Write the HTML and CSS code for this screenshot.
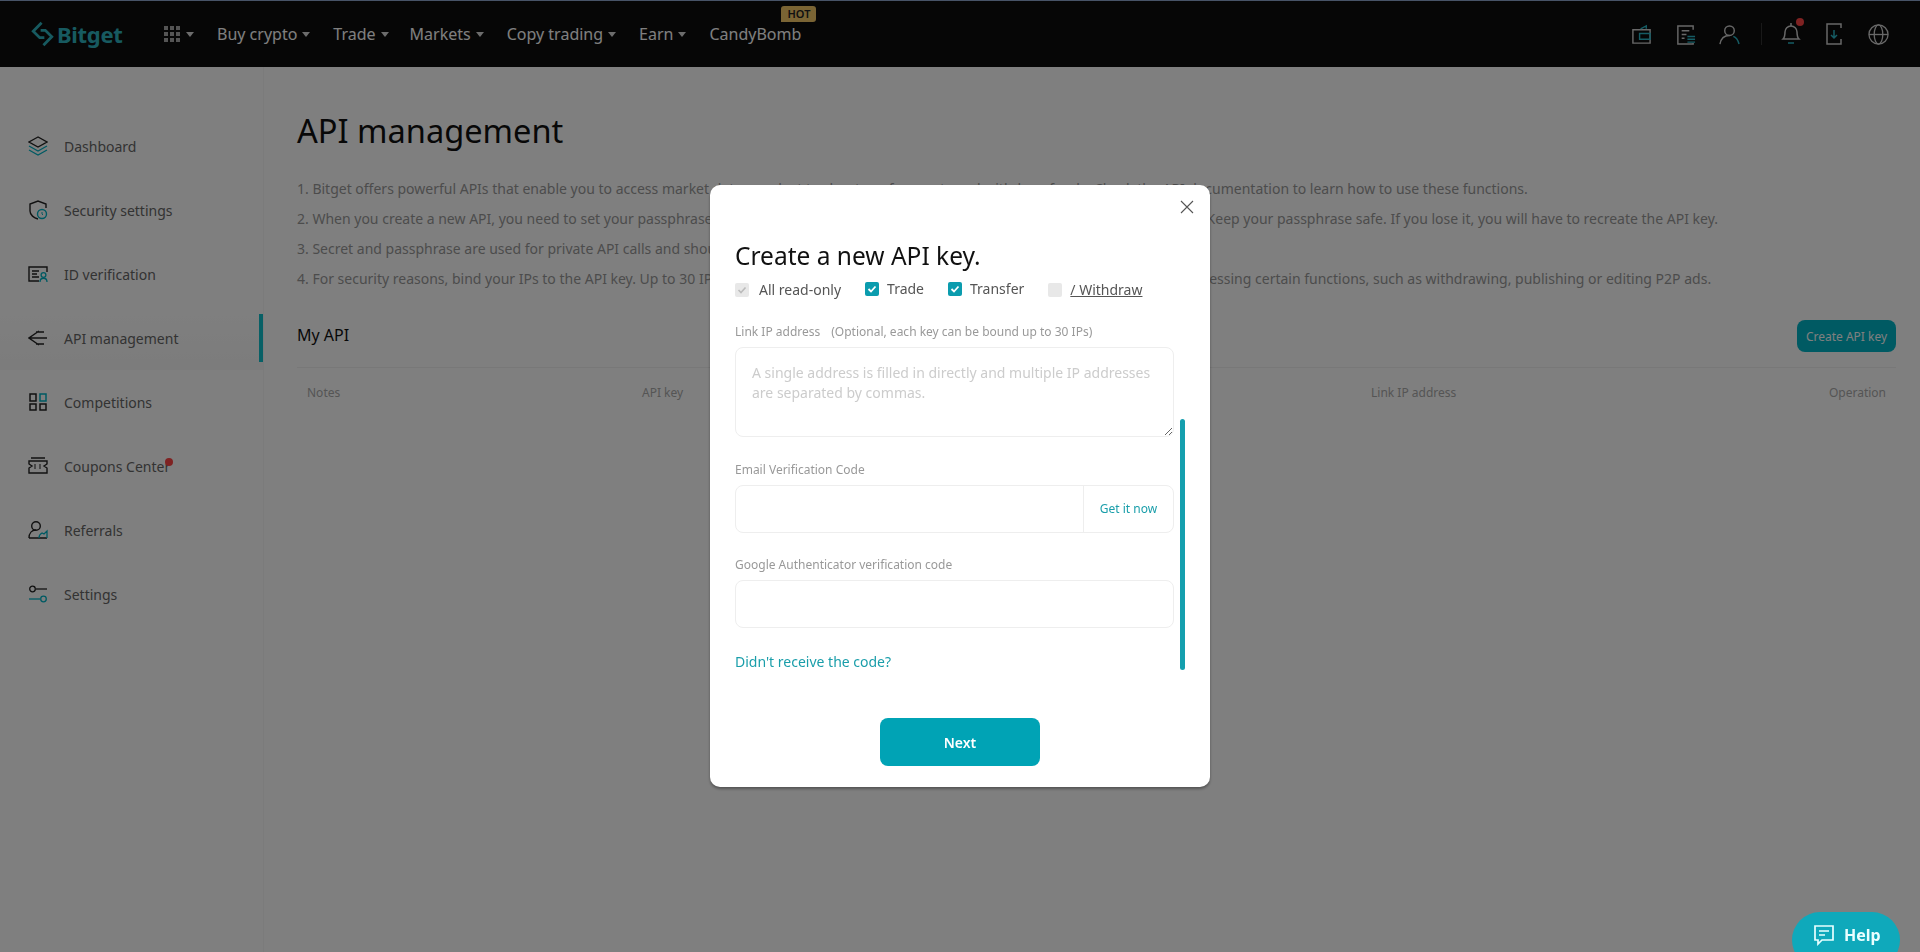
FILE: index.html
```html
<!DOCTYPE html>
<html lang="en">
<head>
<meta charset="utf-8">
<title>API management</title>
<link rel="stylesheet" href="styles.css">
</head>
<body>
<header class="topbar">
  <a class="logo">
    <svg class="logo-mark" viewBox="0 0 26 28" width="25" height="26"><path d="M12 2 3 11l7 7h5M14 26l9-9-7-7h-5" fill="none" stroke="#2fb5c0" stroke-width="3"/></svg>
    <span class="logo-text">Bitget</span>
  </a>
  <div class="apps">
    <svg viewBox="0 0 16 16" width="16" height="16" class="apps-grid"><g fill="#a8a8a8"><rect x="0" y="0" width="4" height="4"/><rect x="6" y="0" width="4" height="4"/><rect x="12" y="0" width="4" height="4"/><rect x="0" y="6" width="4" height="4"/><rect x="6" y="6" width="4" height="4"/><rect x="12" y="6" width="4" height="4"/><rect x="0" y="12" width="4" height="4"/><rect x="6" y="12" width="4" height="4"/><rect x="12" y="12" width="4" height="4"/></g></svg>
    <i class="caret"></i>
  </div>
  <nav class="mainnav">
    <a class="navitem">Buy crypto<i class="caret"></i></a>
    <a class="navitem nav-trade">Trade<i class="caret"></i></a>
    <a class="navitem">Markets<i class="caret"></i></a>
    <a class="navitem">Copy trading<i class="caret"></i></a>
    <a class="navitem">Earn<i class="caret"></i></a>
    <a class="navitem candy">CandyBomb<span class="hot">HOT</span></a>
  </nav>
  <div class="tools">
    <svg class="tool" viewBox="0 0 22 22" width="21" height="21"><path d="M2 6h18v14H2z" fill="none" stroke="#d0d0d0" stroke-width="1.5"/><path d="M9 10h11v6H9z" fill="none" stroke="#2bb8c8" stroke-width="1.5"/><path d="M10 5l6-3v3" fill="none" stroke="#2bb8c8" stroke-width="1.5"/></svg>
    <svg class="tool" viewBox="0 0 22 22" width="21" height="21"><path d="M19 6V2H3v19h16v-1" fill="none" stroke="#d0d0d0" stroke-width="1.5"/><path d="M7 7h8M7 11h5M7 15h3" fill="none" stroke="#d0d0d0" stroke-width="1.5"/><path d="M13 13h8M13 16h8M13 19h8" fill="none" stroke="#2bb8c8" stroke-width="1.5"/></svg>
    <svg class="tool tool-user" viewBox="0 0 22 22" width="21" height="21"><circle cx="11" cy="7" r="5" fill="none" stroke="#d0d0d0" stroke-width="1.5"/><path d="M1 21c1-6 5-9 10-9" fill="none" stroke="#d0d0d0" stroke-width="1.5"/><path d="M15 13c3 1 5 4 6 8" fill="none" stroke="#2bb8c8" stroke-width="1.5"/></svg>
    <span class="tools-sep"></span>
    <span class="bell">
      <svg viewBox="0 0 20 24" width="20" height="24"><path d="M2 17c2-2 2-4 2-7a6 6 0 0 1 12 0c0 3 0 5 2 7z" fill="none" stroke="#d0d0d0" stroke-width="1.5"/><path d="M10 1v3" stroke="#d0d0d0" stroke-width="1.5"/><path d="M7 21h6" stroke="#2bb8c8" stroke-width="1.5"/></svg>
      <i class="bell-dot"></i>
    </span>
    <svg class="tool dl" viewBox="0 0 16 22" width="16" height="22"><path d="M15 5V1H1v20h14V16" fill="none" stroke="#d0d0d0" stroke-width="1.5"/><path d="M8 7v8M5 12l3 3 3-3" fill="none" stroke="#2bb8c8" stroke-width="1.5"/></svg>
    <svg class="tool globe" viewBox="0 0 22 22" width="21" height="21"><g fill="none" stroke="#d0d0d0" stroke-width="1.4"><circle cx="11" cy="11" r="10"/><ellipse cx="11" cy="11" rx="4.5" ry="10"/><path d="M1 11h20"/></g></svg>
  </div>
</header>

<div class="page">
  <aside class="sidebar">
    <a class="side-item">
      <svg viewBox="0 0 20 20" width="20" height="20"><path d="M10 1 1 6l9 5 9-5z" fill="none" stroke="#222" stroke-width="1.3"/><path d="m1 10 9 5 9-5M1 14l9 5 9-5" fill="none" stroke="#00b4c6" stroke-width="1.3"/></svg>
      Dashboard
    </a>
    <a class="side-item">
      <svg viewBox="0 0 20 20" width="20" height="20"><path d="M18 8V4l-8-3-8 3v7c0 4 4 7 8 8" fill="none" stroke="#222" stroke-width="1.4"/><circle cx="14" cy="14" r="4.5" fill="none" stroke="#00b4c6" stroke-width="1.4"/><path d="M14 12v2l1 1" fill="none" stroke="#00b4c6"/></svg>
      Security settings
    </a>
    <a class="side-item">
      <svg viewBox="0 0 20 20" width="20" height="20"><path d="M19 8V3H1v14h10" fill="none" stroke="#222" stroke-width="1.4"/><path d="M4 7h7M4 10h5M4 13h7" stroke="#222" stroke-width="1.4"/><circle cx="15.5" cy="11" r="2.4" fill="none" stroke="#00b4c6" stroke-width="1.3"/><path d="M12 18c0-5 7-5 7 0" fill="none" stroke="#00b4c6" stroke-width="1.3"/></svg>
      ID verification
    </a>
    <a class="side-item active">
      <svg viewBox="0 0 20 20" width="20" height="20"><path d="M11 3 1 10l10 7M1 10h18M8 4h8M8 16h8" fill="none" stroke="#222" stroke-width="1.4"/></svg>
      API management
    </a>
    <a class="side-item">
      <svg viewBox="0 0 20 20" width="20" height="20"><g fill="none" stroke-width="1.5"><path d="M2 2h6v7H2zM2 12h6v6H2zM12 12h6v6h-6z" stroke="#222"/><path d="M12 2h6v7h-6z" stroke="#00b4c6"/></g></svg>
      Competitions
    </a>
    <a class="side-item">
      <svg viewBox="0 0 20 20" width="20" height="20"><path d="M3 2h14M1 5h18v3l-3 2 3 2v5H1v-5l3-2-3-2z" fill="none" stroke="#222" stroke-width="1.4"/><path d="M7 8v5M12 8v5" stroke="#222"/></svg>
      <span class="dotted">Coupons Center<i class="side-dot"></i></span>
    </a>
    <a class="side-item">
      <svg viewBox="0 0 20 20" width="20" height="20"><circle cx="8" cy="6" r="4.3" fill="none" stroke="#222" stroke-width="1.4"/><path d="M1 18c0-5 3-8 7-8M1 18h18" fill="none" stroke="#222" stroke-width="1.4"/><path d="M11 18c0-3 1-4 3-5l2 1 3-3v7" fill="none" stroke="#00b4c6" stroke-width="1.3"/></svg>
      Referrals
    </a>
    <a class="side-item">
      <svg viewBox="0 0 20 20" width="20" height="20"><circle cx="4.5" cy="5" r="2.8" fill="none" stroke="#222" stroke-width="1.3"/><path d="M8 5h11" stroke="#222" stroke-width="1.3"/><path d="M1 15h11" stroke="#00b4c6" stroke-width="1.3"/><circle cx="15.5" cy="15" r="2.8" fill="none" stroke="#00b4c6" stroke-width="1.3"/></svg>
      Settings
    </a>
  </aside>

  <main class="content">
    <h1 class="page-title">API management</h1>
    <ol class="notes">
      <li>1. Bitget offers powerful APIs that enable you to access market data, conduct trades, transfer assets and withdraw funds. Check the API documentation to learn how to use these functions.</li>
      <li>2. When you create a new API, you need to set your passphrase, which is required for API calls and is never saved by Bitget on our servers. Keep your passphrase safe. If you lose it, you will have to recreate the API key.</li>
      <li>3. Secret and passphrase are used for private API calls and should never be shared.</li>
      <li>4. For security reasons, bind your IPs to the API key. Up to 30 IPs can be bound to one key. If no IP is bound, you may be restricted from accessing certain functions, such as withdrawing, publishing or editing P2P ads.</li>
    </ol>
    <div class="api-head">
      <h2 class="api-title">My API</h2>
      <button class="create-btn">Create API key</button>
    </div>
    <div class="table-head">
      <span>Notes</span>
      <span>API key</span>
      <span>Link IP address</span>
      <span>Operation</span>
    </div>
  </main>
</div>

<div class="overlay">
  <section class="modal">
    <svg class="close" viewBox="0 0 14 14" width="14" height="14"><path d="M1 1l12 12M13 1 1 13" stroke="#555" stroke-width="1.1" fill="none"/></svg>
    <h3 class="modal-title">Create a new API key.</h3>
    <div class="perms">
      <label class="perm perm-low perm-read"><span class="box box-off"><svg viewBox="0 0 14 14" width="14" height="14"><path d="m3.5 7 2.5 2.5 4.5-5" fill="none" stroke="#bbb" stroke-width="1.6"/></svg></span>All read-only</label>
      <label class="perm"><span class="box box-on"><svg viewBox="0 0 14 14" width="14" height="14"><path d="m3.5 7 2.5 2.5 4.5-5" fill="none" stroke="#fff" stroke-width="1.8"/></svg></span>Trade</label>
      <label class="perm"><span class="box box-on"><svg viewBox="0 0 14 14" width="14" height="14"><path d="m3.5 7 2.5 2.5 4.5-5" fill="none" stroke="#fff" stroke-width="1.8"/></svg></span>Transfer</label>
      <label class="perm perm-low"><span class="box box-off"></span><u>/ Withdraw</u></label>
    </div>
    <div class="field-label field-ip">Link IP address<span class="optional">(Optional, each key can be bound up to 30 IPs)</span></div>
    <textarea class="ip-input" placeholder="A single address is filled in directly and multiple IP addresses are separated by commas."></textarea>
    <div class="field-label field-email">Email Verification Code</div>
    <div class="input-row">
      <input class="text-input" type="text">
      <span class="get-code">Get it now</span>
    </div>
    <div class="field-label field-google">Google Authenticator verification code</div>
    <div class="input-row"><input class="text-input" type="text"></div>
    <a class="no-code">Didn't receive the code?</a>
    <button class="next-btn">Next</button>
    <span class="scroll-thumb"></span>
  </section>
</div>

<a class="help">
  <svg viewBox="0 0 22 22" width="22" height="22"><path d="M2 2h18v14H9l-4 4v-4H2z" fill="none" stroke="#e8ffff" stroke-width="1.7"/><path d="M6 7h10M6 11h6" stroke="#e8ffff" stroke-width="1.7"/></svg>
  Help
</a>
</body>
</html>
```
FILE: styles.css
```css
* { box-sizing: border-box; }
html, body { margin: 0; height: 100%; overflow: hidden; }
body { background: #fff; font-family: "Noto Sans", sans-serif; color: #222; display: flex; flex-direction: column; }
h1, h2, h3 { margin: 0; font-weight: 400; }

.topbar { height: 67px; flex: none; background: #0c0c0c; border-top: 1px solid #8fa6cf; display: flex; align-items: center; padding-left: 30px; }
.logo { display: flex; align-items: center; gap: 2px; width: 134px; }
.logo-text { font-size: 22px; font-weight: 700; color: #2fb5c0; letter-spacing: -0.3px; line-height: 28px; }
.apps { display: flex; align-items: center; gap: 6px; width: 53px; }
.caret { display: inline-block; width: 0; height: 0; border-left: 4px solid transparent; border-right: 4px solid transparent; border-top: 5px solid #d8d8d8; }
.mainnav { display: flex; gap: 23px; }
.navitem { font-size: 16px; color: #fff; line-height: 24px; display: flex; align-items: center; gap: 5px; white-space: nowrap; }
.nav-trade { margin-right: -2px; }
.candy { position: relative; }
.hot { position: absolute; left: 72px; top: -16px; width: 35px; height: 16px; background: #f5c868; color: #222; font-size: 11px; font-weight: 600; line-height: 16px; text-align: center; border-radius: 3px 3px 3px 0; }
.tools { margin-left: auto; display: flex; align-items: center; padding-right: 31px; }
.tool { display: block; margin-right: 23px; }
.tool-user { margin-right: 21px; }
.tools-sep { width: 1px; height: 22px; background: #333; margin-right: 19px; }
.bell { position: relative; display: block; width: 20px; height: 24px; margin-right: 25px; }
.bell svg { display: block; }
.bell-dot { position: absolute; right: -3px; top: -4px; width: 8px; height: 8px; border-radius: 50%; background: #ff4444; }
.dl { margin-right: 26px; }
.globe { margin-right: 0; }

.page { flex: 1; display: flex; min-height: 0; }
.sidebar { width: 264px; flex: none; padding-top: 47px; border-right: 1px solid #f7f7f7; }
.side-item { height: 64px; display: flex; align-items: center; gap: 16px; padding-left: 28px; font-size: 14px; color: #666; position: relative; }
.side-item svg { flex: none; }
.active { background: linear-gradient(#fff, #f8f8f8); }
.active::after { content: ""; position: absolute; right: 0; top: 0; width: 4px; height: 48px; margin-top: 8px; background: #10c0cc; }
.dotted { position: relative; }
.side-dot { position: absolute; right: -3px; top: 1px; width: 8px; height: 8px; border-radius: 50%; background: #ff4444; }

.content { flex: 1; padding: 42px 24px 0 33px; min-width: 0; }
.page-title { font-size: 32.6px; line-height: 44px; color: #111; }
.notes { list-style: none; margin: 21px 0 0; padding: 0; font-size: 14px; line-height: 30px; color: #999; white-space: nowrap; }
.api-head { margin-top: 26px; display: flex; justify-content: space-between; align-items: center; padding-bottom: 15px; border-bottom: 1px solid #f0f0f0; }
.api-title { font-size: 16px; color: #111; line-height: 22px; margin-bottom: 2px; }
.create-btn { width: 99px; height: 32px; border: 0; border-radius: 8px; background: #00b4c6; color: #fff; font: 400 12px "Noto Sans", sans-serif; padding: 0; }
.table-head { display: grid; grid-template-columns: 335px 729px 1fr auto; padding: 16px 10px 0 10px; font-size: 12px; line-height: 18px; color: #aaa; }

.overlay { position: fixed; inset: 0; background: rgba(0, 0, 0, 0.5); z-index: 10; display: flex; justify-content: center; align-items: flex-start; padding-top: 185px; }
.modal { position: relative; width: 500px; height: 602px; background: #fff; border-radius: 10px; padding: 54px 36px 0 25px; display: flex; flex-direction: column; box-shadow: 0 2px 3px rgba(0, 0, 0, 0.35); }
.close { position: absolute; left: 470px; top: 15px; }
.modal-title { font-size: 24.5px; line-height: 34px; color: #111; }
.perms { display: flex; gap: 24px; align-items: flex-start; height: 23px; margin-top: 5px; font-size: 14px; color: #555; }
.perm { display: flex; align-items: center; gap: 8px; line-height: 22px; white-space: nowrap; }
.perm-low { margin-top: 1px; }
.perm-read { gap: 10px; }
.box { width: 14px; height: 14px; border-radius: 2px; display: block; flex: none; }
.box svg { display: block; }
.box-off { background: #e8e8e8; }
.box-on { background: #0b9cae; }
.field-label { font-size: 12px; line-height: 18px; color: #999; }
.field-ip { margin-top: 22px; }
.optional { margin-left: 11px; }
.ip-input { display: block; width: 439px; height: 90px; margin-top: 6px; border: 1px solid #eee; border-radius: 8px; padding: 15px 16px; font: 14px/20px "Noto Sans", sans-serif; color: #333; outline: 0; }
.ip-input::placeholder { color: #ccc; }
.field-email { margin-top: 24px; }
.input-row { display: flex; width: 439px; height: 48px; margin-top: 6px; border: 1px solid #eee; border-radius: 8px; overflow: hidden; }
.text-input { flex: 1; min-width: 0; border: 0; outline: 0; background: transparent; padding: 0 16px; }
.get-code { width: 90px; border-left: 1px solid #eee; font-size: 12px; line-height: 46px; color: #1a9eaa; text-align: center; }
.field-google { margin-top: 23px; }
.no-code { display: block; margin-top: 24px; font-size: 14px; line-height: 20px; color: #1a9eaa; }
.next-btn { align-self: flex-start; margin: 46px 0 0 145px; width: 160px; height: 48px; border: 0; border-radius: 8px; background: #00a3b5; color: #fff; font: 600 14px "Noto Sans", sans-serif; }
.scroll-thumb { position: absolute; left: 470px; top: 234px; width: 5px; height: 251px; border-radius: 3px; background: #149fae; }

.help { position: fixed; z-index: 20; left: 1792px; top: 912px; width: 108px; height: 56px; border-radius: 28px; background: #0fa9bb; color: #eaffff; font-size: 16px; font-weight: 700; display: flex; align-items: flex-start; gap: 9px; padding: 11px 0 0 21px; line-height: 24px; }
.help svg { flex: none; margin-top: 1px; }
```
